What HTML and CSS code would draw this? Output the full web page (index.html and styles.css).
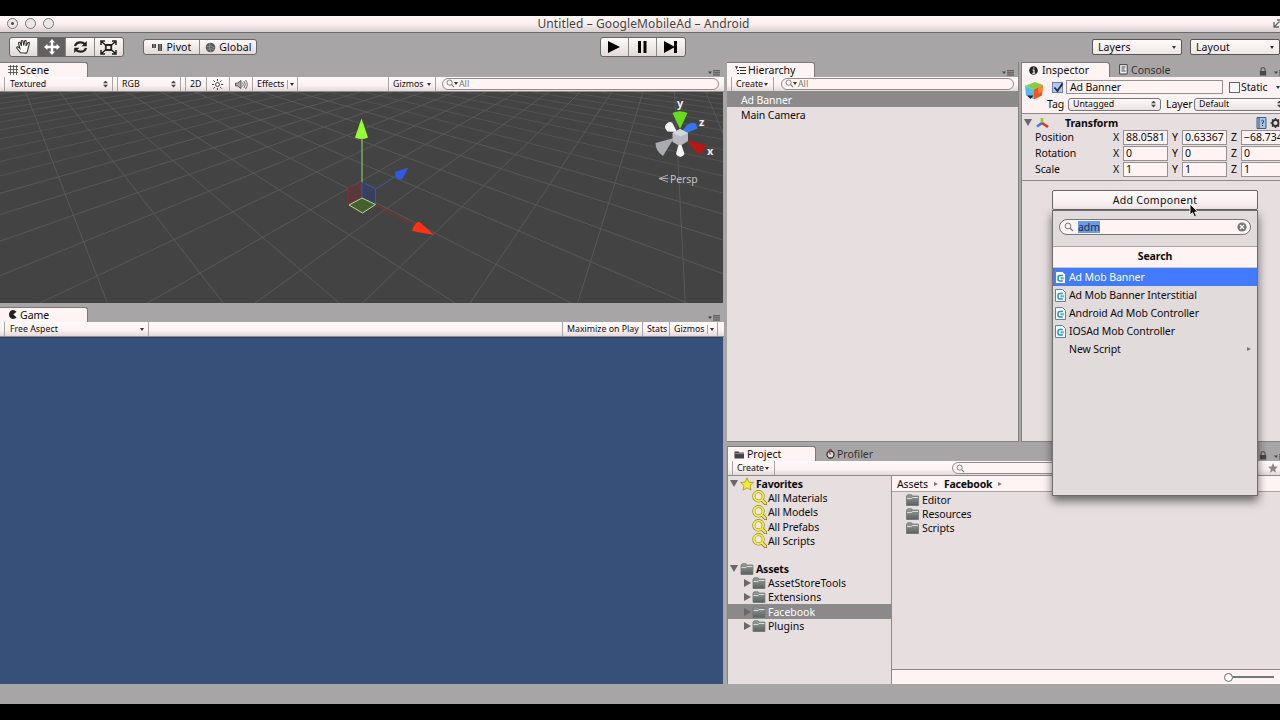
FILE: index.html
```html
<!DOCTYPE html>
<html lang="en">
<head>
    <meta charset="UTF-8">
    <title>Untitled – GoogleMobileAd – Android</title>
    <link rel="stylesheet" href="styles.css">
</head>
<body>
    <svg class="defs" width="0" height="0">
        <defs>
            <linearGradient id="folderFill" x1="0" y1="0" x2="0" y2="1">
                <stop offset="0" stop-color="#9aa09d"/>
                <stop offset="1" stop-color="#59605d"/>
            </linearGradient>
            <symbol id="folder" viewBox="0 0 13 12">
                <path d="M.5 11.5V2.3L1.6.8h4l1 1.3h5.8v9.4z" fill="url(#folderFill)" stroke="#6b726f" stroke-width=".8"/>
                <path d="M1 4.6h4.5l1-1.1H12" fill="none" stroke="#e4e7e5" stroke-width=".9"/>
            </symbol>
            <symbol id="find" viewBox="0 0 15 15">
                <path d="M9.5 9.5l4 4" stroke="#77722c" stroke-width="3.6" stroke-linecap="round"/>
                <circle cx="6.5" cy="6.3" r="4.7" fill="#eee9d8" stroke="#8f8836" stroke-width="3"/>
                <circle cx="6.5" cy="6.3" r="4.7" fill="none" stroke="#f5eb45" stroke-width="1.9"/>
                <path d="M9.8 9.8l3.5 3.5" stroke="#f5eb45" stroke-width="2.2" stroke-linecap="round"/>
            </symbol>
            <symbol id="script" viewBox="0 0 11 13">
                <path d="M.5.5h7l3 3v9H.5z" fill="#f4f8fb" stroke="#5b84a4"/>
                <path d="M7.8 4.6H5Q3 4.6 3 6.5v1.4q0 2 2 2h2.8" fill="none" stroke="#2c8fb4" stroke-width="1.5"/>
                <path d="M5.6 7.2h3.3M6.3 6v2.6M8 6v2.6" stroke="#2ca6b0" stroke-width=".8"/>
            </symbol>
            <symbol id="menu" viewBox="0 0 12 6">
                <path d="M0 1.5h4l-2 2.4z" fill="#444"/>
                <path d="M5 .8h7M5 2.9h7M5 5h7" stroke="#444" stroke-width="1"/>
            </symbol>
            <symbol id="glass" viewBox="0 0 10 10">
                <circle cx="4" cy="4" r="2.9" fill="none" stroke="#777" stroke-width="1"/>
                <path d="M6.2 6.2L9 9" stroke="#777" stroke-width="1.3"/>
            </symbol>
            <symbol id="lock" viewBox="0 0 8 9">
                <path d="M2 4.5V2.6a2 2 0 0 1 4 0v2" fill="none" stroke="#5a5a5a" stroke-width="1.2"/>
                <path d="M.8 4h6.4v4.5H.8z" fill="#484848"/>
            </symbol>
        </defs>
    </svg>

    <div class="titlebar">
        <i class="light dot"></i><i class="light"></i><i class="light"></i>
        <h1>Untitled – GoogleMobileAd – Android</h1>
        <svg class="fullscreen" width="8" height="9"><path d="M1 3v5h5M1.5 7.500l5-5M4 1h4v4" fill="none" stroke="#666" stroke-width="1.3"/></svg>
    </div>

    <div class="toolbar">
        <div class="tools">
            <span class="tool"><svg width="18" height="16" viewBox="0 0 18 16"><path d="M5.600 13.800L2 9.500c-1-1.500.6-2.300 1.500-1.200L5 9.500 3.600 4.700c-.4-1.600 1.200-2 1.700-.6L6.500 7 6.300 2.600c0-1.600 1.700-1.500 1.800 0L8.800 6.500 9.500 2.400c.3-1.400 1.900-1.100 1.700.4L11 7.100l1.700-3c.8-1.300 2.100-.4 1.600.9L13 9.800c-.3 2-.8 3-1.400 4.300z" fill="#fff" stroke="#333" stroke-width="1.1"/></svg></span>
            <span class="tool active"><svg width="16" height="16" viewBox="0 0 16 16"><path d="M8 0l3 3.500H9.200v3.300h3.300V5L16 8l-3.500 3V9.200H9.200v3.300H11L8 16l-3-3.500h1.800V9.200H3.500V11L0 8l3.500-3v1.800h3.300V3.500H5z" fill="#fff"/></svg></span>
            <span class="tool"><svg width="15" height="14" viewBox="0 0 15 14"><path d="M2 6Q3.200 2.300 7.500 2.300q2.800 0 4.200 1.600M13 8q-1.200 3.700-5.500 3.700-2.800 0-4.200-1.600" fill="none" stroke="#222" stroke-width="2.300"/><path d="M13.800 1v5.300H8.600zM1.200 13V7.700h5.200z" fill="#222"/></svg></span>
            <span class="tool"><svg width="17" height="15" viewBox="0 0 17 15"><path d="M5.800 5h5.400v5H5.800z" fill="none" stroke="#222" stroke-width="1.800"/><path d="M1.500 1.500l4 3.500M15.500 1.500l-4 3.500M1.500 13.500l4-3.500M15.500 13.500l-4-3.500M1 5V1h4M12 1h4v4M1 10v4h4M12 14h4v-4" fill="none" stroke="#222" stroke-width="1.500"/></svg></span>
        </div>
        <div class="pivots">
            <span class="pivot"><svg width="11" height="9"><path d="M0 1h4v4H0zM6 1h4v7H6z" fill="#3f3f3f"/><path d="M2 1v4M8 1v7" stroke="#aaa"/></svg>Pivot</span>
            <span class="pivot"><svg width="11" height="11"><circle cx="5.500" cy="5.500" r="4.800" fill="#5a5a5a"/><path d="M1.500 4.500q4-1.500 8 1.500M2 8q4-3 7 0M5 1q-2 4 1 9" fill="none" stroke="#999" stroke-width=".8"/></svg>Global</span>
        </div>
        <div class="playback">
            <span class="play"><svg width="14" height="12"><path d="M1 0l12 6-12 6z"/></svg></span>
            <span class="play"><svg width="9" height="12"><path d="M0 0h3v12H0zM5.500 0h3v12h-3z"/></svg></span>
            <span class="play"><svg width="14" height="12"><path d="M0 0l10 5.500V0h3v12h-3V6.500L0 12z"/></svg></span>
        </div>
        <div class="select layers">Layers<i class="down"></i></div>
        <div class="select layout">Layout<i class="down"></i></div>
    </div>

    <main class="workspace">
        <div class="left">
            <section class="panel scene">
                <div class="tabs">
                    <span class="tab"><svg width="10" height="10"><path d="M2.500 0v10M5.500 0v10M8.500 0v10M0 1.500h10M0 4.500h10M0 7.500h10" stroke="#555" stroke-width=".9"/></svg>Scene</span>
                    <svg class="menu" width="12" height="6"><use href="#menu"/></svg>
                </div>
                <div class="bar">
                    <span class="cell textured">Textured<i class="updown"></i></span>
                    <span class="cell rgb">RGB<i class="updown"></i></span>
                    <span class="cell two-d">2D</span>
                    <span class="cell light-btn"><svg width="11" height="11"><circle cx="5.500" cy="5.500" r="2" fill="none" stroke="#444"/><path d="M5.500 0v2M5.500 9v2M0 5.500h2M9 5.500h2M1.500 1.500l1.500 1.500M8 8l1.500 1.500M9.500 1.500L8 3M3 8L1.500 9.500" stroke="#444"/></svg></span>
                    <span class="cell audio"><svg width="13" height="11"><path d="M.5 4h2L6 1.500v8L2.500 7h-2z" fill="#aaa" stroke="#444" stroke-width=".8"/><path d="M7.500 3.500q1.500 2 0 4M9 2q2.500 3.500 0 7M10.500 1q3.500 4.500 0 9" fill="none" stroke="#444" stroke-width=".8"/></svg></span>
                    <span class="cell effects">Effects<i class="sep"></i><i class="down"></i></span>
                    <span class="fill"></span>
                    <span class="cell scene-gizmos">Gizmos<i class="down"></i></span>
                    <span class="search scene-search"><svg width="9" height="9"><use href="#glass"/></svg><i class="down"></i>All</span>
                </div>
                <svg class="viewport" width="723" height="211" viewBox="0 92 723 211">
                    <g id="grid" stroke="#5b5b5b" stroke-width="1"></g>
                    <!-- move handle -->
                    <path d="M362 198V139" stroke="#8fc25e" stroke-width="1.200"/>
                    <path d="M362 198l34-22" stroke="#3c5f92" stroke-width="1"/>
                    <path d="M362 198l52 27" stroke="#8b2b2b" stroke-width="1"/>
                    <path d="M348 188l14-6v16l-14 7z" fill="#5a383b" stroke="#84303a" stroke-width=".8"/>
                    <path d="M362 182l13.500 6.500v16L362 198z" fill="#384060" stroke="#3e5caa" stroke-width=".8"/>
                    <path d="M362 198l13.500 6.500-13 8.500-13.500-8z" fill="#44602f" stroke="#b5dd8c"/>
                    <path d="M361.500 118.500l6.500 19q-6.500 3-13 0z" fill="#96fb32"/>
                    <path d="M408.500 167.500l-6 11q-3 3-7-2l-.5-4.500z" fill="#3059e8"/>
                    <path d="M434 235l-15-13.500q-5 2-7 9.500z" fill="#ff3218"/>
                    <!-- orientation gizmo -->
                    <path d="M677 132l-9.500-.5q-5-5 0-8.500 2-2 5 0z" fill="#f2f2f2"/>
                    <path d="M682 131l5-6q5-4 9-1l1.500 4.500-9.500 4z" fill="#3775ec"/>
                    <path d="M680 129l-7.500-16q7-3.500 15 0z" fill="#64dc1c"/>
                    <path d="M674 138l-18.500 5q0 8 7.500 13z" fill="#aaabae"/>
                    <path d="M687 140l18.500 5q-1 8-8 9.500z" fill="#b81712"/>
                    <path d="M672.500 133l7.500-4 8 4v8l-8 5-7.500-4z" fill="#b7bac2"/>
                    <path d="M672.500 133l8 3.500 7.500-3.500-8-4z" fill="#d2d5da"/>
                    <path d="M678.500 145h3l3 9q-4 6-8.500 0z" fill="#f5f5f5"/>
                    <text x="677" y="107">y</text>
                    <text x="699" y="126">z</text>
                    <text x="707" y="155">x</text>
                    <path d="M668 175l-9 3.500 9 3.500M659 178.500h9" fill="none" stroke="#b9b9b9" stroke-width=".9"/>
                    <text class="persp" x="670" y="182.500">Persp</text>
                </svg>
            </section>
            <section class="panel game">
                <div class="tabs">
                    <span class="tab"><svg width="10" height="10"><path d="M8.500 1.800Q7 0 4.800 0 1 .8 1 4.800q0 3.500 4 4.200 2.500 0 3.500-1.700L5.300 4.500z" fill="#222"/></svg>Game</span>
                    <svg class="menu" width="12" height="6"><use href="#menu"/></svg>
                </div>
                <div class="bar">
                    <span class="cell aspect">Free Aspect<i class="down"></i></span>
                    <span class="fill"></span>
                    <span class="cell maximize">Maximize on Play</span>
                    <span class="cell stats">Stats</span>
                    <span class="cell game-gizmos">Gizmos<i class="sep"></i><i class="down"></i></span>
                </div>
                <div class="camera"></div>
            </section>
        </div>

        <div class="right">
            <div class="upper">
                <section class="panel hierarchy">
                    <div class="tabs">
                        <span class="tab"><svg width="11" height="9"><path d="M0 .8h3M4 1.500h7M2 4.500h2M5 4.500h6M2 7.500h2M5 7.500h6M1.500 1v2" stroke="#333" stroke-width="1"/></svg>Hierarchy</span>
                        <svg class="menu" width="12" height="6"><use href="#menu"/></svg>
                    </div>
                    <div class="bar">
                        <span class="cell create">Create<i class="down"></i></span>
                        <span class="search hierarchy-search"><svg width="9" height="9"><use href="#glass"/></svg><i class="down"></i>All</span>
                    </div>
                    <ul class="objects">
                        <li class="selected">Ad Banner</li>
                        <li>Main Camera</li>
                    </ul>
                </section>

                <section class="panel inspector">
                    <div class="tabs">
                        <span class="tab"><svg width="9" height="9"><circle cx="4.500" cy="4.500" r="4.300" fill="#222"/><path d="M3.500 4h1.500v3M3.300 7.200h3M4.200 2h1.200" stroke="#fff" stroke-width="1.100" fill="none"/></svg>Inspector</span>
                        <span class="tab idle"><svg width="9" height="11"><path d="M.6.600h7.600v9.400H.6z" fill="#eee" stroke="#444"/><path d="M2.500 3h4M2.500 5h3M2.500 7h4" stroke="#444"/></svg>Console</span>
                        <svg class="lock" width="8" height="9"><use href="#lock"/></svg>
                        <svg class="menu" width="12" height="6"><use href="#menu"/></svg>
                    </div>
                    <div class="object-head">
                        <svg class="cube" width="20" height="20" viewBox="0 0 20 20"><path d="M1 5l10-4 8 3-9 4.500z" fill="#83cf42"/><path d="M1 5l9 3.500v10L2 14.500z" fill="#55bee8"/><path d="M10 8.500L19 4l-1 10.500-8 4z" fill="#ed5424"/><path d="M14 6.500L19 4l-.5 6-4 3z" fill="#f58a33"/><path d="M3 14.500h6.500L6.500 18z" fill="#222"/></svg>
                        <div class="object-rows">
                            <div class="object-row">
                                <span class="check"><svg width="11" height="10"><path d="M1.500 4.500L4.500 8 9.500.500" fill="none" stroke="#1c2c4c" stroke-width="1.900"/></svg></span>
                                <span class="field name">Ad Banner</span>
                                <span class="check empty"></span><span class="static">Static</span><i class="down"></i>
                            </div>
                            <div class="object-row tags">
                                <span class="tag">Tag</span><span class="popup tag-value">Untagged<i class="updown"></i></span>
                                <span class="layer">Layer</span><span class="popup layer-value">Default<i class="updown"></i></span>
                            </div>
                        </div>
                    </div>
                    <div class="transform">
                        <div class="component-title">
                            <i class="fold"></i>
                            <svg width="14" height="11"><path d="M6 6V1" stroke="#8fcf2c" stroke-width="2.600"/><path d="M6 6l-5 3.500" stroke="#3a7be0" stroke-width="2.600"/><path d="M6 6l6 4" stroke="#dc3424" stroke-width="2.600"/></svg>
                            <b>Transform</b>
                            <svg class="help" width="25" height="12"><path d="M1 .5h9v11H1z" fill="#a9c4e2" stroke="#34618f"/><path d="M3 1v10" stroke="#456"/><path d="M5.500 4q1-1.500 2.200 0 0 1-1.200 2v1M6.500 8v1" fill="none" stroke="#234"/><circle cx="19.500" cy="6" r="3" fill="none" stroke="#333" stroke-width="1.800"/><path d="M19.500 1v2M19.500 9v2M14.500 6h2M16 2.500l1.500 1.500M16 9.500L17.500 8M23 2.500L21.500 4M23 9.500L21.500 8" stroke="#333" stroke-width="1.500"/></svg>
                        </div>
                        <div class="vector"><span class="prop">Position</span><label>X</label><span class="field">88.0581</span><label>Y</label><span class="field">0.63367</span><label>Z</label><span class="field">−68.734</span></div>
                        <div class="vector"><span class="prop">Rotation</span><label>X</label><span class="field">0</span><label>Y</label><span class="field">0</span><label>Z</label><span class="field">0</span></div>
                        <div class="vector"><span class="prop">Scale</span><label>X</label><span class="field">1</span><label>Y</label><span class="field">1</span><label>Z</label><span class="field">1</span></div>
                    </div>
                    <div class="add">
                        <div class="add-button">Add Component</div>
                        <div class="add-menu">
                            <div class="add-search">
                                <svg width="10" height="10"><use href="#glass"/></svg><mark>adm</mark>
                                <svg class="clear" width="10" height="10"><circle cx="5" cy="5" r="4.600" fill="#777"/><path d="M3 3l4 4M7 3L3 7" stroke="#fff" stroke-width="1.200"/></svg>
                            </div>
                            <div class="add-title">Search</div>
                            <ul>
                                <li class="current"><svg width="11" height="13"><use href="#script"/></svg>Ad Mob Banner</li>
                                <li><svg width="11" height="13"><use href="#script"/></svg>Ad Mob Banner Interstitial</li>
                                <li><svg width="11" height="13"><use href="#script"/></svg>Android Ad Mob Controller</li>
                                <li><svg width="11" height="13"><use href="#script"/></svg>IOSAd Mob Controller</li>
                                <li class="new">New Script<i class="next"></i></li>
                            </ul>
                        </div>
                        <svg class="cursor" width="12" height="16" viewBox="0 0 12 16"><path d="M1 1v11l2.600-2.300L5.500 14l2-.8L5.700 9H9z" fill="#111" stroke="#f5f5f5" stroke-width=".9"/></svg>
                    </div>
                </section>
            </div>

            <section class="panel project">
                <div class="tabs">
                    <span class="tab"><svg width="11" height="9"><path d="M.5 8.500v-7h4l1 1H10v6z" fill="#444"/><path d="M1 3.500h9" stroke="#bbb" stroke-width=".6"/></svg>Project</span>
                    <span class="tab idle"><svg width="9" height="10"><circle cx="4.500" cy="5.500" r="3.500" fill="#ddd" stroke="#333" stroke-width="1.300"/><path d="M4.500 5.500L3 2M3 .8h3" stroke="#a33" stroke-width="1.200"/></svg>Profiler</span>
                    <svg class="lock" width="8" height="9"><use href="#lock"/></svg>
                    <svg class="menu" width="12" height="6"><use href="#menu"/></svg>
                </div>
                <div class="bar">
                    <span class="cell create">Create<i class="down"></i></span>
                    <span class="fill"></span>
                    <span class="search project-search"><svg width="9" height="9"><use href="#glass"/></svg></span>
                    <span class="cell star"><svg width="10" height="10" viewBox="0 0 14 14"><path d="M7 0l2 5 5 .3-4 3.400 1.400 5L7 11l-4.400 2.700L4 8.700 0 5.300 5 5z" fill="#8b8788"/></svg></span>
                </div>
                <div class="project-body">
                    <ul class="tree">
                        <li class="root"><i class="fold"></i><svg width="14" height="14"><path d="M7 .8l1.900 4.300 4.500.4-3.400 3 1 4.600L7 10.800l-4 2.300 1-4.600-3.400-3 4.500-.4z" fill="#f8ec2a" stroke="#9c9430" stroke-width=".8"/></svg>Favorites</li>
                        <li class="fav"><svg width="15" height="15"><use href="#find"/></svg>All Materials</li>
                        <li class="fav"><svg width="15" height="15"><use href="#find"/></svg>All Models</li>
                        <li class="fav"><svg width="15" height="15"><use href="#find"/></svg>All Prefabs</li>
                        <li class="fav"><svg width="15" height="15"><use href="#find"/></svg>All Scripts</li>
                        <li class="root assets"><i class="fold"></i><svg width="14" height="12"><use href="#folder"/></svg>Assets</li>
                        <li class="dir"><i class="closed"></i><svg width="14" height="12"><use href="#folder"/></svg>AssetStoreTools</li>
                        <li class="dir"><i class="closed"></i><svg width="14" height="12"><use href="#folder"/></svg>Extensions</li>
                        <li class="dir selected"><i class="closed"></i><svg width="14" height="12"><use href="#folder"/></svg>Facebook</li>
                        <li class="dir"><i class="closed"></i><svg width="14" height="12"><use href="#folder"/></svg>Plugins</li>
                    </ul>
                    <div class="files">
                        <div class="crumbs">Assets<i class="next"></i><b>Facebook</b><i class="next"></i></div>
                        <ul>
                            <li><svg width="13" height="12"><use href="#folder"/></svg>Editor</li>
                            <li><svg width="13" height="12"><use href="#folder"/></svg>Resources</li>
                            <li><svg width="13" height="12"><use href="#folder"/></svg>Scripts</li>
                        </ul>
                        <div class="zoombar"><i class="knob"></i><i class="track"></i></div>
                    </div>
                </div>
            </section>
        </div>
    </main>
    <script src="grid.js"></script>
</body>
</html>
```
FILE: styles.css
```css
* {
    box-sizing: border-box;
}
body {
    margin: 0;
    width: 1280px;
    height: 720px;
    overflow: hidden;
    padding: 16px 0;
    background-color: #000;
    color: #0c0a0b;
    font-family: 'Noto Sans', 'Open Sans', sans-serif;
    font-size: 10.5px;
    letter-spacing: -0.1px;
    white-space: nowrap;
}
.defs {
    position: absolute;
}
ul {
    list-style: none;
    margin: 0;
    padding: 0;
}
svg, i {
    flex: none;
    display: block;
}
.titlebar {
    height: 17px;
    display: flex;
    align-items: center;
    padding: 0 0 2px 7px;
    gap: 7px;
    background: linear-gradient(#fff6f6, #fceeee 50%, #d8d0d1);
    border-bottom: 1px solid #6c6a6b;
}
.titlebar h1 {
    margin: 0 auto;
    padding-right: 40px;
    font-size: 12px;
    font-weight: normal;
    line-height: 15px;
    letter-spacing: 0.1px;
    color: #444;
}
.light {
    width: 11px;
    height: 11px;
    border: 1px solid #777;
    border-radius: 50%;
    background: #eee6e7;
}
.dot {
    background: radial-gradient(circle, #555 1px, #eee6e7 2px);
}
.toolbar {
    height: 29px;
    background: #a7a5a6;
    display: flex;
    align-items: center;
    padding: 0 0 1px 9px;
}
.tools, .pivots, .playback {
    display: flex;
    border: 1px solid #666;
    border-radius: 3px;
    background: linear-gradient(#fffafa, #e2dada);
    overflow: hidden;
}
.tool, .play, .pivot {
    display: flex;
    align-items: center;
    justify-content: center;
    border-right: 1px solid #888;
}
.tool:last-child, .play:last-child, .pivot:last-child {
    border-right: 0;
}
.tool {
    width: 28.5px;
    height: 18px;
}
.tool.active {
    background: #626061;
}
.pivots {
    margin-left: 19px;
    width: 115px;
}
.pivot {
    width: 57px;
    height: 14px;
    gap: 3px;
    line-height: 14px;
    padding-left: 1px;
    letter-spacing: 0.1px;
}
.playback {
    margin-left: 343px;
}
.play {
    width: 28.3px;
    height: 18px;
}
.select {
    display: flex;
    align-items: center;
    justify-content: space-between;
    width: 90px;
    height: 16px;
    padding: 0 5px;
    border: 1px solid #555;
    border-radius: 2px;
    background: linear-gradient(#fffafa, #efe7e7);
    letter-spacing: 0.1px;
    flex: none;
}
.layers {
    margin-left: 406px;
}
.layout {
    margin-left: 8px;
}
.down {
    border: 2.5px solid transparent;
    border-top: 3.5px solid #333;
    border-bottom: 0;
}
.next {
    border: 2.5px solid transparent;
    border-left: 4.5px solid #777;
    border-right: 0;
}
.updown {
    width: 5px;
    height: 7px;
    background: #444;
    clip-path: polygon(50% 0, 100% 38%, 0 38%, 0 62%, 100% 62%, 50% 100%, 0 62%, 0 38%);
}
.fold {
    border: 4.5px solid transparent;
    border-top: 7px solid #6a6869;
    border-bottom: 0;
}
.closed {
    border: 4px solid transparent;
    border-left: 7px solid #6a6869;
    border-right: 0;
}

/* docked panels */
.workspace {
    display: flex;
    gap: 3px;
    height: 642px;
    padding-bottom: 20px;
    background: #a7a5a6;
}
.left {
    width: 724px;
    display: flex;
    flex-direction: column;
    gap: 4px;
}
.right {
    width: 553px;
    display: flex;
    flex-direction: column;
    gap: 4px;
}
.upper {
    display: flex;
    gap: 2px;
    height: 380px;
}
.panel {
    display: flex;
    flex-direction: column;
}
.tabs {
    height: 15px;
    display: flex;
    align-items: flex-end;
}
.tab {
    width: 88px;
    height: 15px;
    padding-left: 8px;
    display: flex;
    align-items: center;
    gap: 2px;
    line-height: 14px;
    letter-spacing: 0;
    background: #fff4f4;
    border: solid #7a7879;
    border-width: 1px 1px 0 0;
    border-radius: 0 3px 0 0;
}
.tab.idle {
    background: none;
    border: 0;
    padding-left: 10px;
    color: #333;
}
.tabs .menu {
    margin: 0 4px 1px auto;
}
.bar {
    height: 15px;
    display: flex;
    align-items: center;
    padding-left: 4px;
    background: linear-gradient(#fffafa, #fdf1f1 60%, #e2d9da);
    border-bottom: 1px solid #8d8b8c;
    font-size: 8.8px;
    letter-spacing: 0;
}
.cell {
    height: 14px;
    display: flex;
    align-items: center;
    justify-content: space-between;
    padding: 0 4px;
    border-right: 1px solid #aaa2a3;
    line-height: 14px;
    flex: none;
}
.cell:first-child {
    border-left: 1px solid #aaa2a3;
}
.sep {
    width: 1px;
    height: 9px;
    margin-left: auto;
    margin-right: 2px;
    background: #aaa2a3;
}
.fill {
    flex: 1;
}
.textured {
    width: 109px;
    padding-left: 5px;
}
.rgb {
    width: 64px;
    margin-left: 4px;
    border-left: 1px solid #aaa2a3;
}
.two-d {
    width: 22px;
    margin-left: 4px;
    border-left: 1px solid #aaa2a3;
}
.light-btn {
    width: 23px;
    padding-left: 5px;
}
.audio {
    width: 23px;
    padding-left: 5px;
}
.effects {
    width: 45px;
    padding-right: 3px;
}
.scene-gizmos {
    width: 48px;
    border-left: 1px solid #aaa2a3;
}
.aspect {
    width: 145px;
    padding-left: 5px;
}
.maximize {
    width: 81px;
    border-left: 1px solid #aaa2a3;
}
.stats {
    width: 27px;
}
.game-gizmos {
    width: 48px;
    margin-right: 6px;
    padding-right: 3px;
}
.search {
    height: 12px;
    display: flex;
    align-items: center;
    padding-left: 3px;
    border: 1px solid #928b8c;
    border-radius: 6px;
    background: #fff4f4;
    color: #777;
    line-height: 10px;
    flex: none;
}
.search .down {
    margin: 0 1px 0 -1px;
}
.scene-search {
    width: 277px;
    margin: 0 5px 1px 6px;
}
.hierarchy-search {
    width: 233px;
    margin: 0 0 1px 7px;
}
.project-search {
    width: 306px;
    margin-right: -2px;
}
.viewport {
    background: #434343;
    height: 211px;
}
.scene {
    height: 241px;
}
.viewport text {
    fill: #eee;
    font-size: 11px;
    font-weight: bold;
}
.viewport .persp {
    fill: #c4c4c4;
    font-size: 10.5px;
    font-weight: normal;
}
.game {
    flex: 1;
}
.camera {
    flex: 1;
    width: 723px;
    background: #36507a;
    border-top: 1px solid #2c4163;
}

/* hierarchy */
.hierarchy {
    width: 292px;
    background: #e6dedf;
    border-bottom: 1px solid #858384;
    border-right: 1px solid #858384;
}
.hierarchy .tabs, .inspector .tabs, .project .tabs {
    background: #a7a5a6;
}
.create {
    width: 43px;
    padding-right: 5px;
}
.objects li {
    height: 14.5px;
    padding-left: 14px;
    line-height: 16px;
}
.selected {
    background: #8b8989;
    color: #fff;
}

/* inspector */
.inspector {
    width: 259px;
    background: #e6dedf;
    border-left: 1px solid #858384;
    border-bottom: 1px solid #858384;
    flex: none;
}
.inspector .tab {
    gap: 4px;
    padding-left: 7px;
}
.inspector .idle {
    gap: 3px;
    padding-left: 9px;
}
.tabs .lock {
    margin: 0 7px 1px auto;
}
.lock + .menu {
    margin: 0 -6px 1px 0;
}
.object-head {
    height: 37px;
    display: flex;
    background: #fdf2f2;
    border-bottom: 1px solid #8e8889;
    overflow: hidden;
}
.cube {
    margin: 4px 0 0 2px;
}
.object-rows {
    flex: none;
    width: 250px;
}
.object-row {
    display: flex;
    align-items: center;
    height: 20px;
    padding-left: 8px;
}
.object-row .down {
    margin-left: 9px;
}
.check {
    width: 11px;
    height: 11px;
    border: 1px solid #6b7ca5;
    background: #b3c9ee;
    flex: none;
}
.check.empty {
    margin-left: 6px;
    border-color: #666;
    background: #fff8f8;
}
.field {
    border: 1px solid #968f90;
    background: #fff3f3;
    flex: none;
}
.name {
    width: 157px;
    height: 14px;
    margin-left: 3px;
    padding-left: 3px;
    line-height: 13px;
}
.static {
    margin-left: 1px;
}
.tags {
    height: 14px;
    padding-left: 3px;
}
.tag {
    width: 21px;
}
.popup {
    display: flex;
    align-items: center;
    justify-content: space-between;
    width: 93px;
    height: 13px;
    border: 1px solid #777;
    border-radius: 3px;
    background: linear-gradient(#fffafa, #ebe3e3);
    padding: 0 4px;
    font-size: 8.8px;
    letter-spacing: 0;
    flex: none;
}
.layer {
    width: 28px;
    margin-left: 5px;
}
.transform {
    height: 67px;
    border-bottom: 1px solid #8e8889;
}
.component-title {
    display: flex;
    align-items: center;
    height: 15px;
    padding: 2px 0 0 2px;
    gap: 4px;
}
.component-title b {
    margin-left: 11px;
    letter-spacing: -0.1px;
}
.help {
    margin: 0 -1px 0 auto;
}
.vector {
    display: flex;
    align-items: center;
    height: 16px;
    padding-left: 13px;
}
.prop {
    width: 78px;
    flex: none;
}
.vector .field {
    width: 45px;
    height: 15px;
    padding-left: 2px;
    line-height: 13px;
    letter-spacing: 0;
}
.vector label {
    width: 10px;
    flex: none;
}
.vector .field + label {
    width: 14px;
    padding-left: 4px;
}
.add {
    position: relative;
    width: 206px;
    margin: 9px 0 0 30px;
}
.add-button {
    height: 20px;
    border: 1px solid #676566;
    border-radius: 2px;
    background: linear-gradient(#fffafa, #f4ebeb);
    text-align: center;
    line-height: 18px;
    letter-spacing: 0.3px;
}
.add-menu {
    position: absolute;
    z-index: 2;
    top: 20px;
    left: 0;
    width: 206px;
    height: 286px;
    border: 1px solid #716c6d;
    background: #e2dbdc;
    box-shadow: 0 5px 9px rgba(0, 0, 0, 0.55);
}
.add-search {
    display: flex;
    align-items: center;
    height: 16px;
    margin: 8px 6px 11px;
    padding: 0 3px 0 4px;
    border: 1px solid #777;
    border-radius: 8px;
    background: #fff4f4;
}
.add-search mark {
    margin-left: 4px;
    height: 12px;
    line-height: 12px;
    background: #6c9be8;
    color: #1a2c50;
}
.clear {
    margin-left: auto;
}
.add-title {
    height: 22px;
    line-height: 19px;
    border-top: 1px solid #aaa2a3;
    border-bottom: 1px solid #cdc5c6;
    background: #fff4f4;
    font-weight: bold;
    text-align: center;
}
.add-menu li {
    display: flex;
    align-items: center;
    height: 17.9px;
    padding-top: 1px;
    padding-left: 2px;
    gap: 3px;
}
.add-menu .current {
    background: #427bff;
    color: #fff;
}
.add-menu .new {
    padding: 0 6px 0 16px;
    justify-content: space-between;
}
.cursor {
    position: absolute;
    z-index: 3;
    left: 137px;
    top: 13px;
}

/* project */
.project {
    height: 238px;
    border-left: 1px solid #858384;
}
.project .tab {
    padding-left: 6px;
}
.project .tab.idle {
    padding-left: 10px;
}
.star {
    width: 24px;
    justify-content: flex-end;
    padding-right: 2px;
    border: 0;
}
.project-body {
    display: flex;
    flex: 1;
    background: #e6dedf;
}
.tree {
    width: 164px;
    border-right: 1px solid #8e8889;
    padding-top: 0.5px;
}
.tree li {
    display: flex;
    align-items: center;
    height: 14.3px;
}
.tree .root {
    padding-left: 2px;
    gap: 2px;
    font-weight: bold;
    letter-spacing: -0.2px;
}
.tree .assets {
    margin-top: 13.5px;
}
.tree .fav {
    padding-left: 24px;
}
.fav svg {
    margin-right: 1px;
}
.tree .dir {
    padding-left: 16px;
    letter-spacing: 0;
}
.dir svg {
    margin: 0 2px 0 1px;
}
.files {
    flex: 1;
    display: flex;
    flex-direction: column;
}
.crumbs {
    height: 16px;
    display: flex;
    align-items: center;
    gap: 6px;
    padding-left: 5px;
    background: #fff4f4;
    border-bottom: 1px solid #aaa2a3;
}
.crumbs b {
    letter-spacing: -0.2px;
}
.files ul {
    flex: 1;
    padding: 0.5px 0 0 14px;
}
.files li {
    display: flex;
    align-items: center;
    gap: 3px;
    height: 14.3px;
}
.zoombar {
    height: 15px;
    display: flex;
    align-items: center;
    justify-content: flex-end;
    padding-right: 6px;
    background: #fff4f4;
    border-top: 1px solid #8e8889;
}
.knob {
    width: 9px;
    height: 9px;
    border: 1px solid #666;
    border-radius: 50%;
    background: #fff;
}
.track {
    width: 41px;
    height: 2px;
    background: #777;
}
.fullscreen {
    margin-right: -1px;
}
```
FILE: grid.js
```js
// perspective floor of the scene view: two sets of lines, one vanishing point each
const grid = document.getElementById('grid');

function addLine(vx, bottomX, opacity) {
    const line = document.createElementNS('http://www.w3.org/2000/svg', 'line');
    line.setAttribute('x1', vx);
    line.setAttribute('y1', 5);
    line.setAttribute('x2', bottomX * 2 - vx);
    line.setAttribute('y2', 599);
    line.setAttribute('opacity', opacity);
    grid.appendChild(line);
}

for (let k = -15; k <= 9; k++) {
    addLine(670, 42 + 107.2 * k, k < -4 ? 0.65 : 0.9);
}
for (let k = -1; k <= 20; k++) {
    addLine(-8, 107 + 115.5 * k, k > 8 ? 0.65 : 0.9);
}
```
